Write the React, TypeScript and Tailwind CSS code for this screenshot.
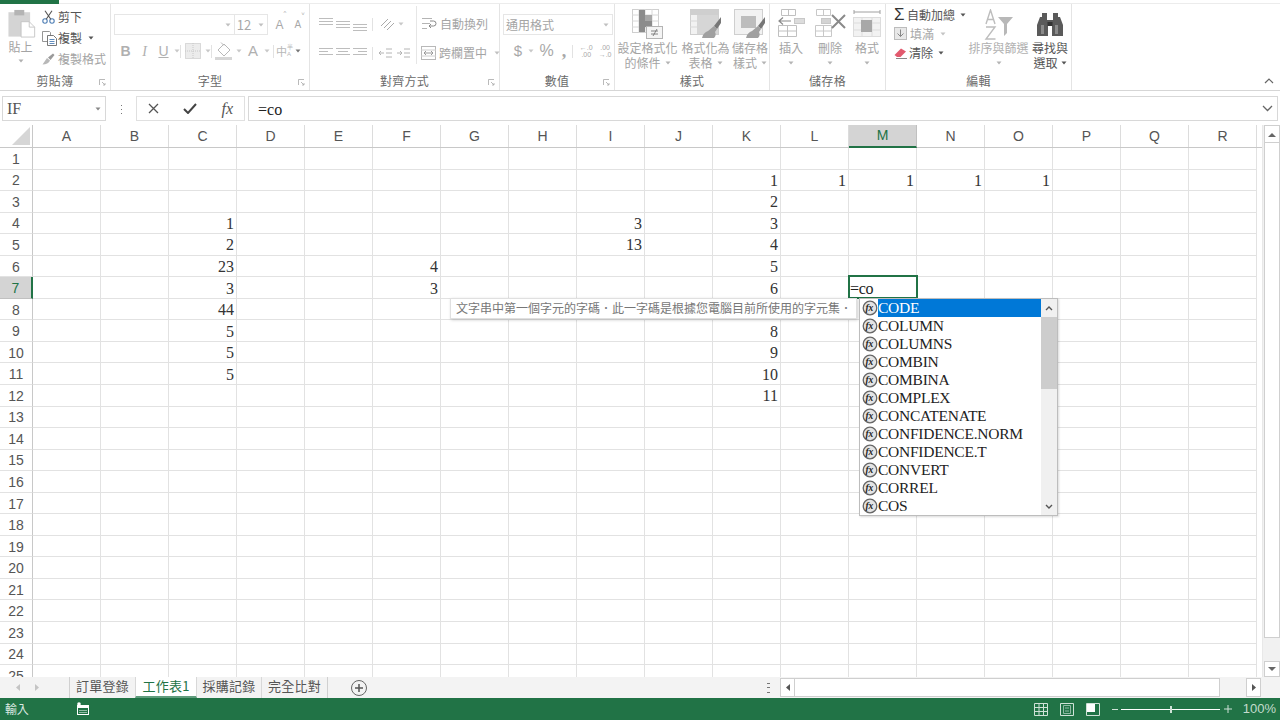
import type { ReactNode } from "react";

const SANS = "font-['Liberation_Sans','Noto_Sans_CJK_TC',sans-serif]";
const SERIF = "font-['Liberation_Serif','Noto_Sans_CJK_TC',serif]";
const CJK = "font-['Noto_Sans_CJK_TC','Liberation_Sans',sans-serif]";

const COLS = "ABCDEFGHIJKLMNOPQR".split("");
const ROWS = Array.from({ length: 25 }, (_, i) => i + 1);

// sheet values, keyed by cell
const CELLS: Record<string, string> = {
  K2: "1", L2: "1", M2: "1", N2: "1", O2: "1",
  K3: "2", K4: "3", K5: "4", K6: "5", K7: "6", K9: "8", K10: "9", K11: "10", K12: "11",
  C4: "1", C5: "2", C6: "23", C7: "3", C8: "44", C9: "5", C10: "5", C11: "5",
  F6: "4", F7: "3", I4: "3", I5: "13",
};

const FUNCS = [
  "CODE", "COLUMN", "COLUMNS", "COMBIN", "COMBINA", "COMPLEX",
  "CONCATENATE", "CONFIDENCE.NORM", "CONFIDENCE.T", "CONVERT", "CORREL", "COS",
];

function Caret({ className = "text-[#9a9a9a]" }: { className?: string }) {
  return (
    <svg width="6" height="4" viewBox="0 0 6 4" className={`shrink-0 ${className}`}>
      <path d="M0.5 0.5h5L3 3.5z" fill="currentColor" />
    </svg>
  );
}

function Launcher() {
  return (
    <svg width="7" height="7" viewBox="0 0 7 7" className="text-[#a8a8a8]">
      <path d="M0.5 6V0.5H6M3 3l3 3M6 4v2H4" fill="none" stroke="currentColor" strokeWidth="0.8" />
    </svg>
  );
}

function GroupLabel({ label, launcher, w }: { label: string; launcher?: boolean; w: string }) {
  return (
    <div className={`${w} h-[18px] flex items-center relative justify-center text-[12px] text-[#6a6a6a] tracking-[0.3px]`}>
      {label}
      {launcher && (
        <span className="absolute right-[4px] top-[7px]">
          <Launcher />
        </span>
      )}
    </div>
  );
}

function Group({ w, children, label, launcher }: { w: string; children: ReactNode; label: string; launcher?: boolean }) {
  return (
    <div className={`${w} shrink-0 flex flex-col border-r border-[#e4e4e4] whitespace-nowrap`}>
      <div className="h-[69px] flex">{children}</div>
      <GroupLabel label={label} launcher={launcher} w="w-full" />
    </div>
  );
}

function PasteIcon() {
  return (
    <svg width="28" height="29" viewBox="0 0 31 31">
      <rect x="0.5" y="3" width="24" height="27" fill="#d4d4d4" />
      <rect x="7" y="0.5" width="11" height="6" fill="#b4b4b4" />
      <path d="M14.5 13.5h9l6 6v11h-15z" fill="#fff" stroke="#c4c4c4" />
      <path d="M23.5 13.5v6h6" fill="none" stroke="#c4c4c4" />
    </svg>
  );
}

function ScissorsIcon() {
  return (
    <svg width="13" height="14" viewBox="0 0 13 14" fill="none">
      <circle cx="3" cy="11" r="2.2" stroke="#4f7fb5" strokeWidth="1.1" />
      <circle cx="10" cy="11" r="2.2" stroke="#4f7fb5" strokeWidth="1.1" />
      <path d="M4.2 9.3 10 0.8M8.8 9.3 3 0.8" stroke="#555" strokeWidth="1.1" />
    </svg>
  );
}

function CopyIcon() {
  return (
    <svg width="15" height="15" viewBox="0 0 15 15" fill="#fff">
      <path d="M0.5 0.5h7l1 1v9h-8z" stroke="#8a8a8a" strokeWidth="0.9" />
      <path d="M5.5 4.5h6l3 3v7h-9z" stroke="#6a6a6a" strokeWidth="0.9" />
      <path d="M7.5 8.5h5M7.5 10.5h5M7.5 12.5h5" stroke="#4f7fb5" strokeWidth="0.9" />
    </svg>
  );
}

function BrushIcon() {
  return (
    <svg width="13" height="12" viewBox="0 0 13 12">
      <path d="M0.5 11.5 5 5l3 2.5C7 10 4 11.5 0.5 11.5z" fill="#b8b8b8" />
      <path d="M6 4.5 11 0.5l1.5 1.5L8.5 7z" fill="#9a9a9a" />
    </svg>
  );
}

function LinesIcon({ ys, x = [[0, 14], [0, 14], [0, 14]] }: { ys: number[]; x?: number[][] }) {
  return (
    <svg width="14" height="14" viewBox="0 0 14 14" className="text-[#bdbdbd]">
      {ys.map((y, i) => (
        <path key={i} d={`M${x[i][0]} ${y + 0.5}H${x[i][1]}`} stroke="currentColor" />
      ))}
    </svg>
  );
}

function Sep({ h = "h-[13px]" }: { h?: string }) {
  return <div className={`w-px ${h} bg-[#e2e2e2]`} />;
}

function ConditionalIcon() {
  return (
    <svg width="32" height="30" viewBox="0 0 32 30">
      <rect x="0.5" y="0.5" width="26" height="23" fill="#fff" stroke="#cfcfcf" />
      <path d="M7 0v24M13 0v24M20 0v24M0 6h27M0 12h27M0 18h27" stroke="#d8d8d8" />
      <rect x="7" y="1" width="6" height="22" fill="#8c8c8c" />
      <rect x="13" y="6" width="7" height="6" fill="#a8a8a8" />
      <rect x="13" y="12" width="7" height="6" fill="#8c8c8c" />
      <rect x="14.5" y="17.5" width="16" height="12" fill="#f4f4f4" stroke="#b4b4b4" />
      <path d="M19 22h7M19 25h7M25 20l-4 7" stroke="#777" strokeWidth="0.9" fill="none" />
    </svg>
  );
}

function TableIcon({ dark = false }: { dark?: boolean }) {
  return (
    <svg width="32" height="30" viewBox="0 0 32 30">
      <rect x="0.5" y="0.5" width="28" height="25" fill="#f2f2f2" stroke="#cfcfcf" />
      {dark ? (
        <rect x="7" y="7" width="15" height="12" fill="#bdbdbd" />
      ) : (
        <>
          <rect x="1" y="1" width="27" height="5" fill="#cfcfcf" />
          <rect x="7" y="6" width="21" height="19" fill="#d6d6d6" />
          <path d="M0 12h7M0 18h7" stroke="#d8d8d8" />
        </>
      )}
      <path d="M31 8 24 17l3 3 4-6z" fill="#777" />
      <path d="M24 17 18 22c-3 1-5 3-6 7h12c2-2 2-4 1-6l2-3z" fill="#a0a0a0" />
    </svg>
  );
}

function InsertIcon() {
  return (
    <svg width="27" height="28" viewBox="0 0 27 28" fill="none">
      <path d="M3.5 0.5h14v6h-14zM10.5 0.5v6M0.5 16.5h18v11h-18zM9.5 16.5v11M0.5 22h18" stroke="#c0c0c0" />
      <rect x="16.5" y="9.5" width="10" height="5" fill="#dcdcdc" stroke="#c8c8c8" />
      <path d="M13 12H1M5 8.5 1 12l4 3.5" stroke="#8a8a8a" strokeWidth="1.2" />
    </svg>
  );
}

function DeleteIcon() {
  return (
    <svg width="31" height="28" viewBox="0 0 31 28" fill="none">
      <path d="M1.5 0.5h14v6h-14zM8.5 0.5v6M0.5 16.5h16v11h-16zM8.5 16.5v11M0.5 22h16" stroke="#c8c8c8" />
      <rect x="6.5" y="9.5" width="9" height="5" fill="#d4d4d4" stroke="#c8c8c8" />
      <path d="M17 6l13 13M30 6 17 19" stroke="#8a8a8a" strokeWidth="2" />
    </svg>
  );
}

function FormatIcon() {
  return (
    <svg width="28" height="29" viewBox="0 0 28 29" fill="none">
      <path d="M1 3h26M1 1v4M27 1v4" stroke="#a0a0a0" />
      <rect x="0.5" y="8.5" width="27" height="19" fill="#f2f2f2" stroke="#dcdcdc" />
      <path d="M9 8v20M19 8v20M0 14h28M0 21h28" stroke="#dcdcdc" />
      <rect x="8" y="11" width="11" height="12" fill="#a8a8a8" />
    </svg>
  );
}

function SortIcon() {
  return (
    <svg width="30" height="31" viewBox="0 0 30 31" fill="none">
      <path d="M2 15 6.5 1 11 15M3.5 10.5h6" stroke="#bdbdbd" strokeWidth="1.4" />
      <path d="M2 18h9L2 30h9.5" stroke="#bdbdbd" strokeWidth="1.4" />
      <path d="M14 8h15l-6 7v9l-3 3V15z" fill="#b8b8b8" />
    </svg>
  );
}

function BinocularsIcon() {
  return (
    <svg width="28" height="24" viewBox="0 0 28 24">
      <path d="M4 5h2V1h5v7h6V1h5v4h2l3 8v11H16V13h-4v11H1V13z" fill="#5a5a5a" />
      <path d="M5 13h3v9H5zM19 13h3v9h-3z" fill="#8a8a8a" />
      <rect x="11.5" y="10" width="5" height="4" fill="#333" />
    </svg>
  );
}

function Tool({ children, w = "w-[19px]" }: { children: ReactNode; w?: string }) {
  return <div className={`${w} flex items-center justify-center shrink-0`}>{children}</div>;
}

function ClipboardGroup() {
  return (
    <Group w="w-[111px]" label="剪貼簿" launcher>
      <div className="w-[42px] shrink-0 pl-[8px] flex flex-col items-start">
        <div className="mt-[5px]"><PasteIcon /></div>
        <div className="w-[25px] text-center text-[12px] text-[#a4a4a4] leading-[18px]">貼上</div>
        <div className="w-[25px] flex justify-center mt-[3px]"><Caret className="text-[#b0b0b0]" /></div>
      </div>
      <div className="flex flex-col text-[12px] pt-[4px] gap-[3px]">
        <div className="h-[18px] flex items-center gap-[3px] text-[#555]"><ScissorsIcon /><span>剪下</span></div>
        <div className="h-[18px] flex items-center gap-[1px] text-[#555]"><CopyIcon /><span>複製</span><span className="ml-[5px]"><Caret className="text-[#555]" /></span></div>
        <div className="h-[18px] flex items-center gap-[3px] text-[#a4a4a4]"><BrushIcon /><span>複製格式</span></div>
      </div>
    </Group>
  );
}

function FontGroup() {
  return (
    <Group w="w-[199px]" label="字型" launcher>
      <div className="flex flex-col pl-[3px] pt-[10px] w-full">
        <div className="flex items-center h-[21px]">
          <div className="w-[122px] h-full border border-[#e6e6e6] flex items-center justify-end pr-[3px]"><Caret className="text-[#c0c0c0]" /></div>
          <div className="w-[34px] h-full border border-l-0 border-[#e6e6e6] flex items-center justify-between px-[2px] pr-[3px] text-[13px] text-[#a8a8a8]">12<Caret className="text-[#c0c0c0]" /></div>
          <div className={`ml-[3px] w-[19px] text-center text-[12px] text-[#a8a8a8] ${SANS}`}>A<sup className="text-[6px] align-top">^</sup></div>
          <div className={`w-[19px] text-center text-[10px] text-[#a8a8a8] ${SANS}`}>A<sup className="text-[6px] align-top">˅</sup></div>
        </div>
        <div className={`flex items-center h-[20px] mt-[6px] pl-[2px] text-[#b0b0b0] ${SANS}`}>
          <Tool><span className="text-[14px] font-bold">B</span></Tool>
          <Tool><span className="text-[14px] italic font-['Liberation_Serif']">I</span></Tool>
          <Tool><span className="text-[14px] underline">U</span></Tool>
          <Tool w="w-[7px]"><Caret className="text-[#c8c8c8]" /></Tool>
          <Sep />
          <Tool w="w-[24px]">
            <svg width="16" height="16" viewBox="0 0 16 16"><rect x="0.5" y="0.5" width="15" height="15" fill="#ececec" stroke="#bdbdbd" strokeDasharray="1 1" /><path d="M8 0v16M0 8h16" stroke="#c8c8c8" strokeDasharray="1 1" /></svg>
          </Tool>
          <Tool w="w-[6px]"><Caret className="text-[#c8c8c8]" /></Tool>
          <Sep />
          <Tool w="w-[24px]">
            <svg width="18" height="18" viewBox="0 0 18 18" fill="none"><path d="M3 8 9 2l6 6-6 6z" stroke="#b8b8b8" /><path d="M6 0.5 9 3.5" stroke="#b8b8b8" /><rect y="15" width="17" height="3" fill="#d6d6d6" /></svg>
          </Tool>
          <Tool w="w-[6px]"><Caret className="text-[#c8c8c8]" /></Tool>
          <Tool w="w-[22px]"><span className="text-[15px]">A</span></Tool>
          <Tool w="w-[6px]"><Caret className="text-[#c8c8c8]" /></Tool>
          <Tool w="w-[6px]"><Sep /></Tool>
          <span className={`text-[11px] text-[#b8b8b8] ${CJK}`}>中</span>
          <span className="text-[6px] leading-[7px] w-[7px] text-[#b8b8b8]">半<br />A</span>
          <Tool w="w-[8px]"><Caret className="text-[#777]" /></Tool>
        </div>
      </div>
    </Group>
  );
}

function AlignGroup() {
  return (
    <Group w="w-[190px]" label="對齊方式" launcher>
      <div className="flex flex-col pl-[8px] pt-[11px] w-[106px] shrink-0">
        <div className="flex items-center h-[18px]">
          <Tool w="w-[16px]"><LinesIcon ys={[1, 4, 7]} /></Tool>
          <Tool w="w-[17px]"><LinesIcon ys={[4, 7, 10]} /></Tool>
          <Tool w="w-[17px]"><LinesIcon ys={[7, 10, 13]} /></Tool>
          <Tool w="w-[8px]"><Sep /></Tool>
          <Tool w="w-[22px]">
            <svg width="14" height="14" viewBox="0 0 14 14" fill="none"><path d="M1 9 8 2M4 11l7-7M7 13 14 6" stroke="#aaa" /></svg>
          </Tool>
          <Caret className="text-[#c8c8c8]" />
        </div>
        <div className="flex items-center h-[18px] mt-[11px]">
          <Tool w="w-[16px]"><LinesIcon ys={[2, 5, 8]} x={[[0, 14], [0, 9], [0, 14]]} /></Tool>
          <Tool w="w-[17px]"><LinesIcon ys={[2, 5, 8]} x={[[0, 14], [2, 12], [0, 14]]} /></Tool>
          <Tool w="w-[17px]"><LinesIcon ys={[2, 5, 8]} x={[[0, 14], [5, 14], [0, 14]]} /></Tool>
          <Tool w="w-[8px]"><Sep /></Tool>
          <Tool w="w-[18px]"><svg width="14" height="10" viewBox="0 0 14 10" fill="none"><path d="M6 5H1M3 3 1 5l2 2M8 1h6M8 5h6M8 9h6" stroke="#b4b4b4" /></svg></Tool>
          <Tool w="w-[18px]"><svg width="14" height="10" viewBox="0 0 14 10" fill="none"><path d="M1 5h5M4 3l2 2-2 2M8 1h6M8 5h6M8 9h6" stroke="#b4b4b4" /></svg></Tool>
        </div>
      </div>
      <div className="w-px h-[58px] mt-[2px] bg-[#e6e6e6] shrink-0" />
      <div className="flex flex-col pl-[4px] pt-[11px] text-[12px] text-[#a4a4a4]">
        <div className="flex items-center h-[18px] gap-[3px]">
          <svg width="16" height="14" viewBox="0 0 16 14" fill="none"><path d="M1 1.5h10M1 6.5h8M1 11.5h5" stroke="#b4b4b4" strokeWidth="1.2" /><path d="M9 9h3.5a2.5 2.5 0 0 0 0-5H9M10 7 8 9l2 2" stroke="#888" /></svg>
          <span>自動換列</span>
        </div>
        <div className="flex items-center h-[18px] mt-[11px] gap-[3px]">
          <svg width="15" height="14" viewBox="0 0 15 14" fill="none"><rect x="0.5" y="0.5" width="14" height="13" stroke="#b8b8b8" /><path d="M0 4h15M0 10h15" stroke="#d0d0d0" /><path d="M3 7h9M5 5 3 7l2 2M10 5l2 2-2 2" stroke="#999" /></svg>
          <span>跨欄置中</span>
          <span className="ml-[4px]"><Caret className="text-[#c0c0c0]" /></span>
        </div>
      </div>
    </Group>
  );
}

function NumberGroup() {
  return (
    <Group w="w-[115px]" label="數值" launcher>
      <div className="flex flex-col pl-[3px] pt-[10px] w-full">
        <div className="w-[110px] h-[21px] border border-[#e6e6e6] flex items-center justify-between pl-[2px] pr-[3px] text-[12px] text-[#a4a4a4]">
          通用格式<Caret className="text-[#c0c0c0]" />
        </div>
        <div className={`flex items-center h-[20px] mt-[6px] text-[#a8a8a8] ${SANS}`}>
          <span className="text-[15px] w-[20px] ml-[5px] text-center">$</span>
          <span className="w-[10px]"><Caret className="text-[#c8c8c8]" /></span>
          <span className="text-[16px] w-[18px] text-center">%</span>
          <span className="text-[18px] font-bold w-[17px] text-center font-['Liberation_Serif'] leading-[16px]">,</span>
          <Sep />
          <span className="text-[7px] leading-[7px] w-[20px] ml-[3px] text-center">←.0<br />.00</span>
          <span className="text-[7px] leading-[7px] w-[18px] text-center">.00<br />→.0</span>
        </div>
      </div>
    </Group>
  );
}

function BigButton({ w, icon, lines, color = "text-[#a4a4a4]" }: { w: string; icon: ReactNode; lines: string[]; color?: string }) {
  return (
    <div className={`${w} shrink-0 flex flex-col items-center text-[12px] ${color} leading-[15px] whitespace-nowrap`}>
      <div className="h-[35px] pt-[5px] flex items-start justify-center">{icon}</div>
      <div className="mt-[1px]">{lines[0]}</div>
      <div className="flex items-center justify-center gap-[4px] h-[15px]">
        {lines[1]}
        <Caret className="text-[#b4b4b4]" />
      </div>
    </div>
  );
}

function StyleGroup() {
  return (
    <Group w="w-[155px]" label="樣式">
      <BigButton w="w-[65px]" icon={<ConditionalIcon />} lines={["設定格式化", "的條件"]} />
      <BigButton w="w-[51px]" icon={<TableIcon />} lines={["格式化為", "表格"]} />
      <BigButton w="w-[38px]" icon={<TableIcon dark />} lines={["儲存格", "樣式"]} />
    </Group>
  );
}

function CellsGroup() {
  return (
    <Group w="w-[116px]" label="儲存格">
      <BigButton w="w-[42px]" icon={<InsertIcon />} lines={["插入", ""]} />
      <BigButton w="w-[36px]" icon={<DeleteIcon />} lines={["刪除", ""]} />
      <BigButton w="w-[38px]" icon={<FormatIcon />} lines={["格式", ""]} />
    </Group>
  );
}

function EditGroup() {
  return (
    <Group w="w-[186px]" label="編輯">
      <div className="w-[80px] shrink-0 flex flex-col pl-[8px] pt-[1px] text-[12px]">
        <div className="h-[19px] flex items-center text-[#555]">
          <span className={`text-[17px] w-[14px] leading-[19px] text-[#333] ${SANS}`}>Σ</span>
          <span>自動加總</span><span className="ml-[5px]"><Caret className="text-[#555]" /></span>
        </div>
        <div className="h-[19px] flex items-center text-[#a8a8a8] gap-[3px]">
          <svg width="13" height="13" viewBox="0 0 13 13" fill="none"><rect x="0.5" y="0.5" width="12" height="12" fill="#e8e8e8" stroke="#bcbcbc" /><path d="M6.5 2.5v7M3.5 6.5l3 3 3-3" stroke="#888" /></svg>
          <span>填滿</span><span className="ml-[3px]"><Caret className="text-[#c4c4c4]" /></span>
        </div>
        <div className="h-[19px] flex items-center text-[#555] gap-[1px]">
          <svg width="14" height="12" viewBox="0 0 14 12"><path d="M0.5 8 7 1.5l5 3-5.5 5.5H3z" fill="#e25a6e" /><path d="M2 11.5h11" stroke="#888" /></svg>
          <span>清除</span><span className="ml-[4px]"><Caret className="text-[#555]" /></span>
        </div>
      </div>
      <BigButton w="w-[65px]" icon={<SortIcon />} lines={["排序與篩選", ""]} color="text-[#b0b0b0]" />
      <div className="w-[38px] shrink-0 flex flex-col items-center text-[12px] text-[#555] leading-[15px] whitespace-nowrap">
        <div className="h-[35px] pt-[8px] flex justify-center"><BinocularsIcon /></div>
        <div className="mt-[1px]">尋找與</div>
        <div className="flex items-center gap-[3px] h-[15px]">選取<Caret className="text-[#555]" /></div>
      </div>
    </Group>
  );
}

function Ribbon() {
  return (
    <div className={`relative h-[87px] flex border-b border-[#d6d6d6] ${CJK}`}>
      <ClipboardGroup />
      <FontGroup />
      <AlignGroup />
      <NumberGroup />
      <StyleGroup />
      <CellsGroup />
      <EditGroup />
      <svg width="10" height="6" viewBox="0 0 10 6" className="absolute right-[6px] bottom-[6px]" fill="none">
        <path d="M1 5l4-4 4 4" stroke="#666" strokeWidth="1.2" />
      </svg>
    </div>
  );
}

function FormulaBar() {
  return (
    <div className="mt-[5px] h-[25px] flex pl-[2px] pr-[2px] text-[#333]">
      <div className="w-[104px] border border-[#d8d8d8] flex items-center justify-between pl-[4px] pr-[4px]">
        <span className={`text-[16px] text-[#555] ${SERIF}`}>IF</span>
        <Caret className="text-[#888]" />
      </div>
      <div className="w-[30px] flex items-center justify-center">
        <svg width="3" height="10" viewBox="0 0 3 10"><path d="M1 1h1v1H1zM1 5h1v1H1zM1 9h1v1H1z" fill="#777" /></svg>
      </div>
      <div className="w-[109px] border border-[#e0e0e0] flex items-center justify-between px-[11px]">
        <svg width="11" height="11" viewBox="0 0 11 11" fill="none"><path d="M1 1l9 9M10 1l-9 9" stroke="#555" strokeWidth="1.3" /></svg>
        <svg width="14" height="11" viewBox="0 0 14 11" fill="none"><path d="M1 6l4 4 8-9" stroke="#444" strokeWidth="2" /></svg>
        <span className={`text-[16px] italic text-[#555] ${SERIF}`}>fx</span>
      </div>
      <div className="ml-[3px] flex-1 border border-[#d8d8d8] flex items-center justify-between pl-[9px] pr-[4px]">
        <span className={`text-[16px] leading-none mt-[3px] text-[#222] ${SERIF}`}>=co</span>
        <svg width="11" height="7" viewBox="0 0 11 7" fill="none"><path d="M1 1l4.5 4.5L10 1" stroke="#666" strokeWidth="1.3" /></svg>
      </div>
    </div>
  );
}

function FxBadge() {
  return (
    <svg width="16" height="16" viewBox="0 0 16 16" className="shrink-0">
      <circle cx="8" cy="8" r="6.8" fill="#e4e4e4" stroke="#666" strokeWidth="1.3" />
      <text x="3.4" y="11.2" fontSize="9.5" fontStyle="italic" fontWeight="bold" fontFamily="Liberation Serif, serif" fill="#222">fx</text>
    </svg>
  );
}

function AutoComplete() {
  return (
    <div className={`absolute left-[859px] top-[173px] w-[199px] h-[218px] bg-white border border-[#bdbdbd] flex shadow-[1px_1px_2px_rgba(0,0,0,0.15)] ${SERIF}`}>
      <div className="flex-1 min-w-0">
        {FUNCS.map((fn, i) => (
          <div key={fn} className="h-[18px] flex items-center pl-[2px]">
            <FxBadge />
            <span className={`flex-1 h-full text-[15.5px] leading-[18px] tracking-[-0.25px] ${i === 0 ? "bg-[#0078d7] text-white" : "text-[#222]"}`}>{fn}</span>
          </div>
        ))}
      </div>
      <div className="w-[16px] flex flex-col bg-[#f0f0f0]">
        <div className="h-[18px] flex items-center justify-center">
          <svg width="8" height="5" viewBox="0 0 8 5" fill="none"><path d="M1 4l3-3 3 3" stroke="#555" strokeWidth="1.4" /></svg>
        </div>
        <div className="h-[72px] bg-[#cdcdcd]" />
        <div className="flex-1" />
        <div className="h-[18px] flex items-center justify-center">
          <svg width="8" height="5" viewBox="0 0 8 5" fill="none"><path d="M1 1l3 3 3-3" stroke="#555" strokeWidth="1.4" /></svg>
        </div>
      </div>
    </div>
  );
}

function Sheet() {
  return (
    <div className="relative flex-1 min-w-0 overflow-hidden">
      <div className={`flex h-[23px] border-b border-[#c8c8c8] ${SANS}`}>
        <div className="w-[33px] shrink-0 border-r border-[#c8c8c8] relative flex items-end justify-end pr-[2px] pb-[2px]">
          <svg width="18" height="18" viewBox="0 0 18 18"><path d="M18 0v18H0z" fill="#d6d6d6" /></svg>
        </div>
        {COLS.map((c) => (
          <div
            key={c}
            className={`w-[68px] shrink-0 flex items-center justify-center text-[14px] border-r ${
              c === "M" ? "bg-[#d4d4d4] text-[#217346] border-[#c0c0c0] border-b-2 border-b-[#217346] h-[23px]" : "text-[#555] border-[#dcdcdc]"
            }`}
          >
            {c}
          </div>
        ))}
      </div>
      {ROWS.map((r) => (
        <div key={r} className="flex h-[21.55px]">
          <div
            className={`w-[33px] shrink-0 flex items-center justify-center pt-[2px] text-[14px] border-b border-r ${SANS} ${
              r === 7 ? "bg-[#d4d4d4] text-[#217346] border-b-[#c0c0c0] border-r-2 border-r-[#217346]" : "text-[#555] border-b-[#e2e2e2] border-r-[#c8c8c8]"
            }`}
          >
            {r}
          </div>
          {COLS.map((c) => (
            <div
              key={c}
              className={`w-[68px] shrink-0 border-r border-b border-[#e2e2e2] flex items-center justify-end pr-[2px] pt-[2px] text-[16px] text-[#333] ${SERIF}`}
            >
              {CELLS[`${c}${r}`]}
            </div>
          ))}
        </div>
      ))}

      {/* active cell */}
      <div className={`absolute left-[848px] top-[150px] w-[70px] h-[24px] border-2 border-[#217346] bg-white text-[16px] leading-[24px] tracking-[-0.3px] text-[#222] ${SERIF}`}>=co</div>

      {/* function tooltip */}
      <div className={`absolute left-[450px] top-[173px] w-[407px] h-[21px] bg-white border border-[#e0e0e0] shadow-[1px_1px_3px_rgba(0,0,0,0.2)] pl-[5px] text-[12px] leading-[17px] text-[#777] whitespace-nowrap ${CJK}`}>
        文字串中第一個字元的字碼．此一字碼是根據您電腦目前所使用的字元集．
      </div>

      <AutoComplete />
    </div>
  );
}

function VScroll() {
  return (
    <div className="w-[18px] shrink-0 bg-[#f1f1f1] flex flex-col pl-[1px] border-l border-[#e8e8e8]">
      <div className="h-[18px] bg-white border border-[#cfcfcf] flex items-center justify-center">
        <svg width="8" height="5" viewBox="0 0 8 5"><path d="M0 5l4-4 4 4z" fill="#666" /></svg>
      </div>
      <div className="h-[495px] bg-white border-x border-b border-[#cfcfcf]" />
      <div className="flex-1" />
      <div className="h-[16px] bg-white border border-[#cfcfcf] flex items-center justify-center">
        <svg width="8" height="5" viewBox="0 0 8 5"><path d="M0 0l4 4 4-4z" fill="#666" /></svg>
      </div>
    </div>
  );
}

function TabBar() {
  return (
    <div className={`h-[21px] flex items-center bg-[#f3f3f3] text-[13px] leading-[16px] tracking-[0.25px] text-[#555] ${CJK}`}>
      <div className="w-[70px] h-full flex items-center border-r border-[#d0d0d0] pl-[16px] gap-[15px]">
        <svg width="4" height="7" viewBox="0 0 4 7"><path d="M4 0v7L0 3.5z" fill="#c4c4c4" /></svg>
        <svg width="4" height="7" viewBox="0 0 4 7"><path d="M0 0v7l4-3.5z" fill="#c4c4c4" /></svg>
      </div>
      <div className="w-[65px] text-center pb-[4px]">訂單登錄</div>
      <div className="w-[62px] h-full bg-white text-center text-[#217346] border-b-2 border-[#5f9c7c] border-x border-x-[#d8d8d8] pt-[1px]">工作表1</div>
      <div className="w-[65px] h-full text-center border-r border-[#d8d8d8] pt-[1px]">採購記錄</div>
      <div className="w-[66px] h-full text-center border-r border-[#d0d0d0] pt-[1px]">完全比對</div>
      <div className="ml-[23px] w-[16px] h-[16px] rounded-full border border-[#666] flex items-center justify-center">
        <svg width="8" height="8" viewBox="0 0 8 8"><path d="M4 0v8M0 4h8" stroke="#555" strokeWidth="1.5" /></svg>
      </div>
      <div className="ml-[400px] w-[3px] h-[10px] flex flex-col justify-between">
        <span className="h-px bg-[#777]" /><span className="h-px bg-[#777]" /><span className="h-px bg-[#777]" />
      </div>
      <div className="ml-[10px] flex h-[19px]">
        <div className="w-[15px] bg-white border border-[#cfcfcf] flex items-center justify-center">
          <svg width="4" height="7" viewBox="0 0 4 7"><path d="M4 0v7L0 3.5z" fill="#555" /></svg>
        </div>
        <div className="w-[425px] bg-white border-y border-r border-[#cfcfcf]" />
        <div className="w-[26px]" />
        <div className="w-[15px] bg-white border border-[#cfcfcf] flex items-center justify-center">
          <svg width="4" height="7" viewBox="0 0 4 7"><path d="M0 0v7l4-3.5z" fill="#555" /></svg>
        </div>
      </div>
    </div>
  );
}

function StatusBar() {
  return (
    <div className={`h-[22px] bg-[#217346] flex items-center text-[12px] text-[#dbe9e1] ${CJK}`}>
      <span className="ml-[5px] w-[71px] tracking-[-0.3px]">輸入</span>
      <svg width="14" height="14" viewBox="0 0 14 14" fill="none">
        <rect x="1.5" y="3.5" width="11" height="9" fill="#217346" stroke="#fff" />
        <rect x="1" y="3" width="12" height="3" fill="#fff" />
        <circle cx="3" cy="2" r="1.8" fill="#fff" />
        <path d="M3 8.5h8M3 10.5h8" stroke="#8fbba4" />
      </svg>
      <div className="ml-auto flex items-center">
        <svg width="14" height="13" viewBox="0 0 14 13" fill="none"><path d="M0.5 0.5h13v12H0.5zM5 0v13M9.5 0v13M0 4.5h14M0 8.5h14" stroke="#cfe2d7" /></svg>
        <svg width="14" height="13" viewBox="0 0 14 13" fill="none" className="ml-[12px]"><path d="M0.5 0.5h13v12H0.5z" stroke="#cfe2d7" /><path d="M3.5 2.5h7v8h-7zM5 5h4M5 8h4" stroke="#8fbba4" /></svg>
        <svg width="14" height="13" viewBox="0 0 14 13" fill="none" className="ml-[12px]"><path d="M0.5 0.5h13v12H0.5z" stroke="#cfe2d7" /><rect x="1" y="1" width="8" height="8" fill="#fff" /></svg>
        <span className="ml-[12px] w-[6px] h-px bg-[#cfe2d7]" />
        <div className="ml-[3px] relative w-[99px] h-px bg-[#fff]">
          <span className="absolute left-[49px] -top-[3px] w-[2px] h-[7px] bg-[#cfe2d7]" />
        </div>
        <svg width="8" height="8" viewBox="0 0 8 8" className="ml-[4px]"><path d="M4 0v8M0 4h8" stroke="#cfe2d7" /></svg>
        <span className={`ml-[11px] mr-[4px] text-[13px] text-[#c4dccd] ${SANS}`}>100%</span>
      </div>
    </div>
  );
}

export default function App() {
  return (
    <div className="w-[1280px] h-[720px] overflow-hidden bg-white flex flex-col">
      <div className="h-[4px] flex shrink-0">
        <div className="w-[59px] bg-[#217346]" />
        <div className="flex-1 border-b border-[#ececec]" />
      </div>
      <Ribbon />
      <FormulaBar />
      <div className="flex flex-1 min-h-0 mt-[4px]">
        <Sheet />
        <VScroll />
      </div>
      <TabBar />
      <StatusBar />
    </div>
  );
}
